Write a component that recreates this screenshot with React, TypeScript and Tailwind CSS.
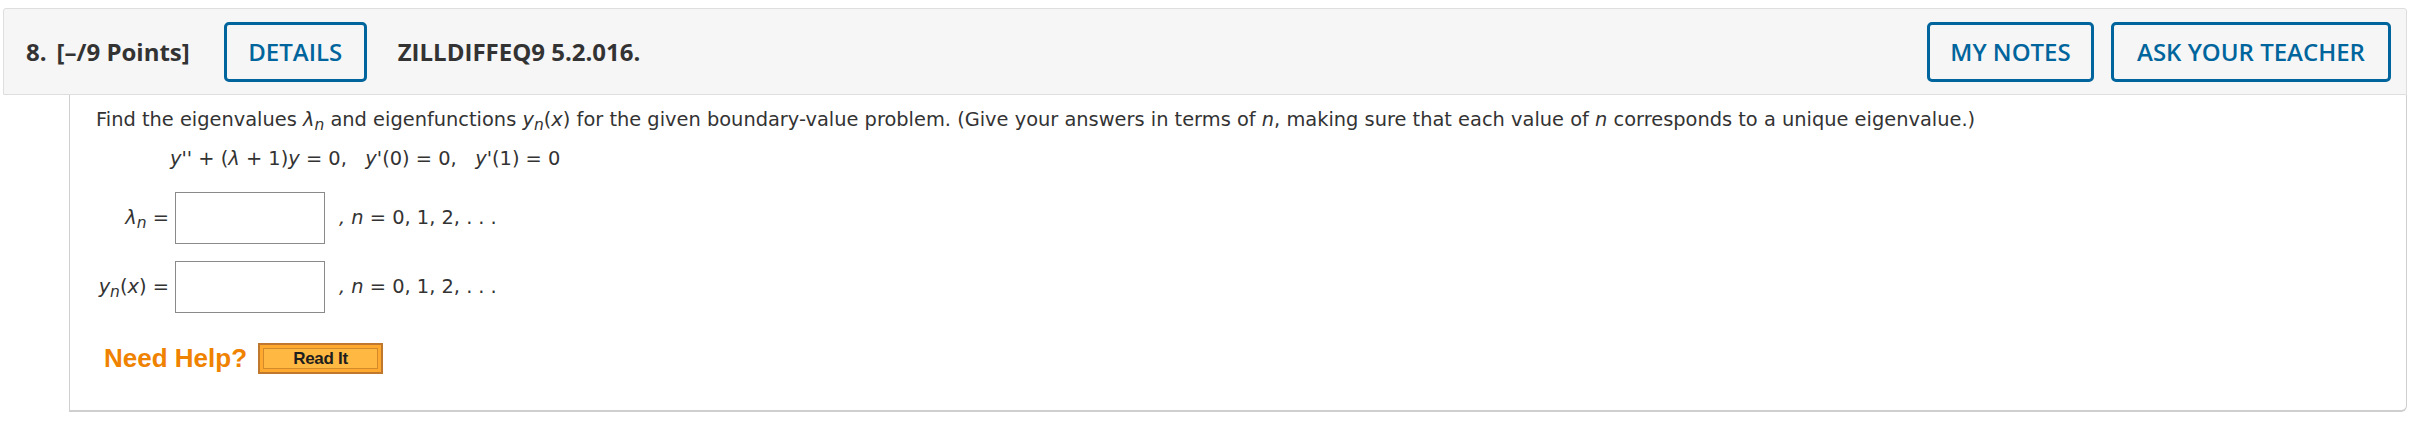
import React from 'react';

const body = { fontFamily: '"DejaVu Sans", Verdana, sans-serif' };
const head = { fontFamily: '"Open Sans", "Noto Sans", sans-serif' };
const arial = { fontFamily: '"Liberation Sans", Arial, sans-serif' };

function Sub({ base, children }: { base: React.ReactNode; children?: React.ReactNode }) {
  return (
    <span>
      <i>{base}</i>
      <sub className="text-[0.8em] italic">n</sub>
      {children}
    </span>
  );
}

function AnswerRow({ label }: { label: React.ReactNode }) {
  return (
    <div className="flex items-center">
      <div className="w-[79px] text-right pr-[6px] whitespace-nowrap">{label}</div>
      <div className="w-[150px] h-[52px] border border-[#8a8a8a] bg-white" />
      <div className="ml-[14px] text-[#333] whitespace-nowrap">
        <i>, n</i> = 0, 1, 2, <span className="tracking-[6px]">...</span>
      </div>
    </div>
  );
}

export default function App() {
  return (
    <div className="w-[2410px] h-[423px] bg-white pt-[8px] px-[3px]">
      <div
        style={head}
        className="h-[87px] bg-[#f6f6f6] border border-[#dedede] rounded-t-[3px] flex items-center pl-[22px] pr-[15px] text-[#333]"
      >
        <span className="text-[24px] font-bold">8.</span>
        <span className="text-[24px] font-bold ml-[10px]">[–/9 Points]</span>
        <button className="ml-[34px] h-[60px] w-[143px] border-[3px] border-[#00659c] rounded-[5px] text-[#00659c] text-[24px] font-semibold">
          DETAILS
        </button>
        <span className="ml-[31px] text-[24px] font-bold">ZILLDIFFEQ9 5.2.016.</span>
        <div className="ml-auto flex gap-[17px]">
          <button className="h-[60px] w-[167px] border-[3px] border-[#00659c] rounded-[5px] text-[#00659c] text-[24px] font-semibold">
            MY NOTES
          </button>
          <button className="h-[60px] w-[280px] border-[3px] border-[#00659c] rounded-[5px] text-[#00659c] text-[24px] font-semibold">
            ASK YOUR TEACHER
          </button>
        </div>
      </div>
      <div
        style={body}
        className="ml-[66px] h-[317px] border-x border-b-2 border-[#cfcfcf] rounded-br-[6px] bg-white text-[#333] text-[19.4px] pl-[26px] pt-[10px]"
      >
        <p className="leading-[30px] whitespace-nowrap">
          Find the eigenvalues <Sub base="λ" /> and eigenfunctions <Sub base="y">(<i>x</i>)</Sub> for the given
          boundary-value problem. (Give your answers in terms of <i>n</i>, making sure that each value of <i>n</i>{' '}
          corresponds to a unique eigenvalue.)
        </p>
        <p className="leading-[30px] mt-[9px] pl-[74px] whitespace-nowrap">
          <i>y''</i> + (<i>λ</i> + 1)<i>y</i> = 0,&nbsp;&nbsp; <i>y'</i>(0) = 0,&nbsp;&nbsp; <i>y'</i>(1) = 0
        </p>
        <div className="mt-[18px] flex flex-col gap-[17px]">
          <AnswerRow label={<Sub base="λ">&nbsp;=</Sub>} />
          <AnswerRow label={<Sub base="y">(<i>x</i>) =</Sub>} />
        </div>
        <div className="mt-[26px] flex items-center pl-[8px]">
          <span className="text-[#ef8200] text-[26px] font-bold" style={arial}>
            Need Help?
          </span>
          <button
            className="ml-[11px] w-[125px] h-[31px] border-2 border-[#c0782e] bg-[#ffa92e] p-[3px] flex"
            style={arial}
          >
            <span className="flex-1 flex items-center justify-center border border-[#d4892a] bg-[#ffb942] text-[17px] font-bold text-[#1e1e1e] tracking-[-0.3px]">
              Read It
            </span>
          </button>
        </div>
      </div>
    </div>
  );
}
